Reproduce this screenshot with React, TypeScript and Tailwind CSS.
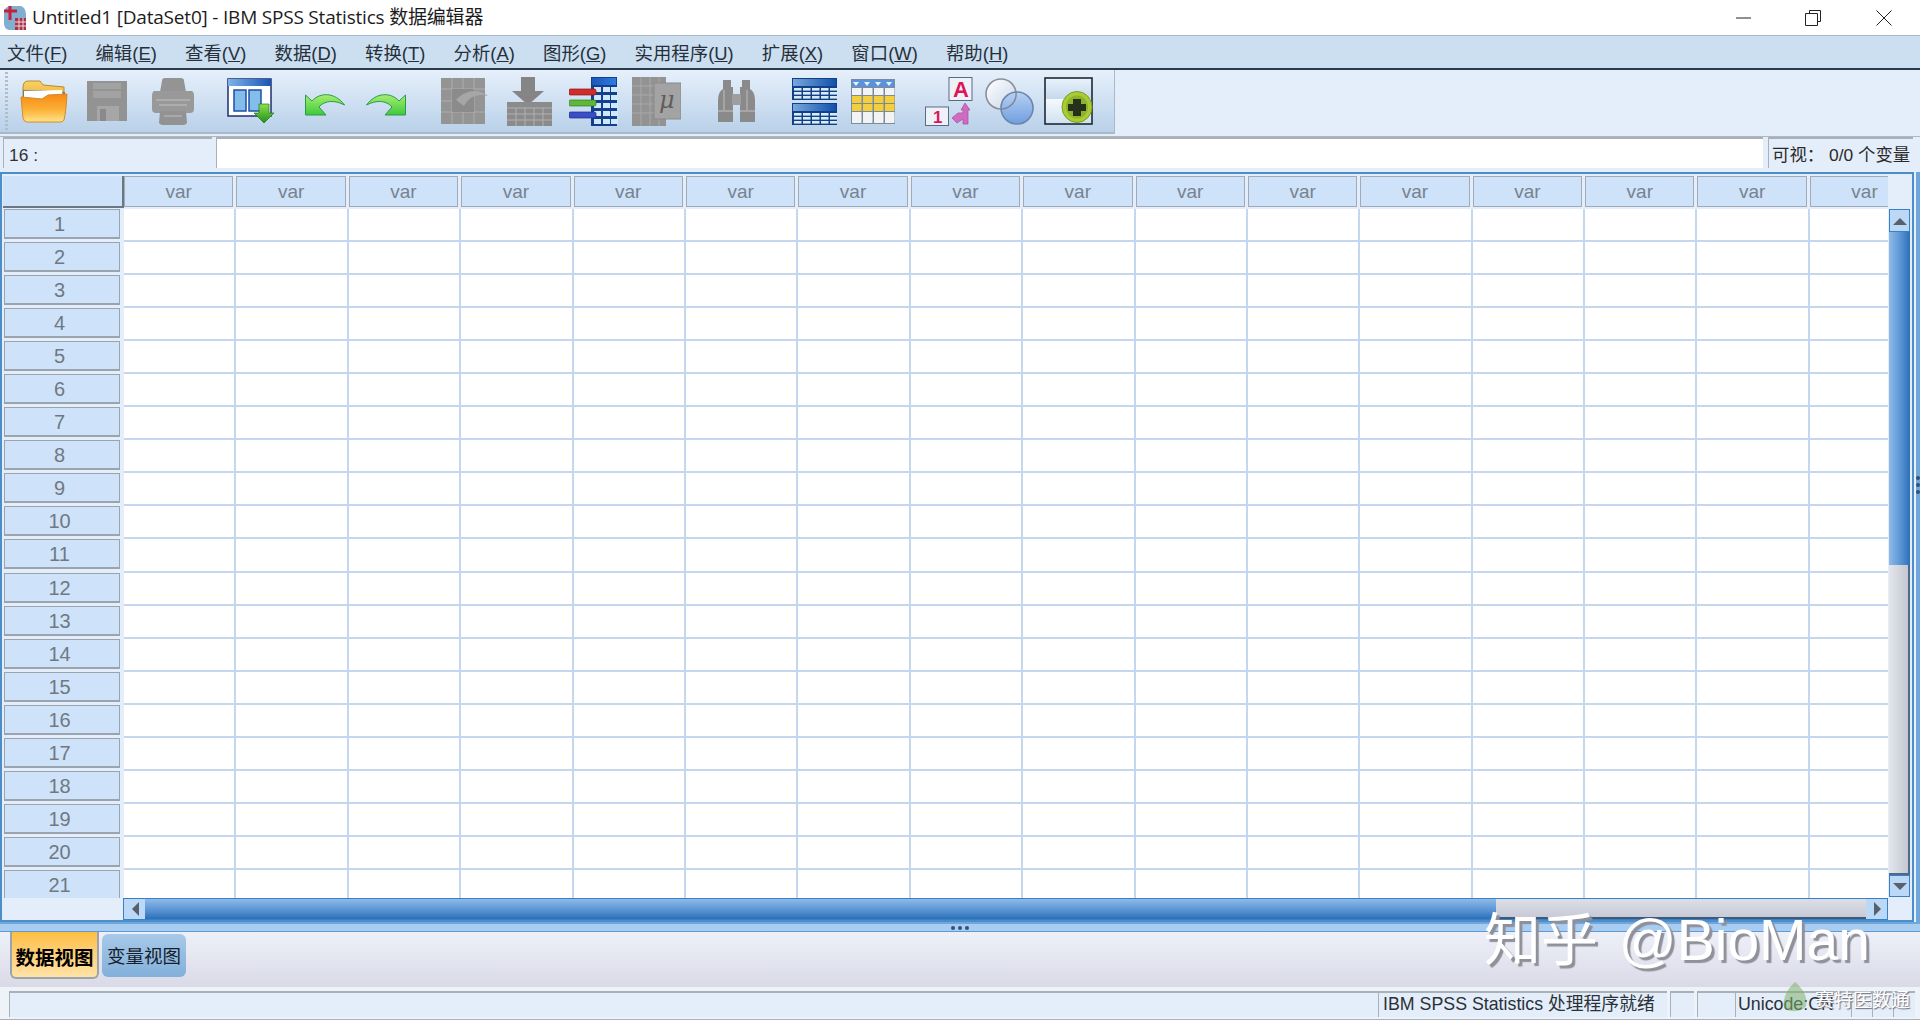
import React from "react";

const menus: [string, string][] = [
  ["文件", "F"], ["编辑", "E"], ["查看", "V"], ["数据", "D"], ["转换", "T"], ["分析", "A"],
  ["图形", "G"], ["实用程序", "U"], ["扩展", "X"], ["窗口", "W"], ["帮助", "H"],
];
const cols = Array.from({ length: 16 }, (_, i) => i);
const rows = Array.from({ length: 21 }, (_, i) => i + 1);

function AppIcon() {
  return (
    <svg width="25" height="26" viewBox="0 0 25 26" className="shrink-0">
      <path d="M2 8 Q2 1 10 1 L19 1 Q24 3 24 10 L24 22 Q23 25 18 25 L7 25 Q2 24 2 18 Z" fill="#7fb0d0" />
      <rect x="13" y="13" width="11" height="12" fill="#a8324a" />
      <path d="M13 17h11M13 21h11M17 13v12M21 13v12" stroke="#f2d9de" strokeWidth="1" />
      <path d="M8 1v14M2 6h13" stroke="#c8203c" strokeWidth="3" />
    </svg>
  );
}

function Folder() {
  return (
    <svg width="48" height="43" viewBox="0 0 48 43">
      <defs>
        <linearGradient id="fa" x1="0" y1="0" x2="0" y2="1"><stop offset="0" stopColor="#f8d468" /><stop offset="1" stopColor="#e8a92c" /></linearGradient>
        <linearGradient id="fb" x1="0" y1="0" x2="0" y2="1"><stop offset="0" stopColor="#f78a16" /><stop offset="0.55" stopColor="#fbb035" /><stop offset="1" stopColor="#ffe48c" /></linearGradient>
      </defs>
      <path d="M3 8 Q3 1 8 1 L20 1 L23 5 L44 7 L44 22 L3 22 Z" fill="url(#fa)" stroke="#b98a30" />
      <path d="M3 10 L20 10 L45 12 L45 22 L3 22Z" fill="#3f5c8e" opacity="0.6" />
      <path d="M4 11 L42 10 L43 20 L4 20 Z" fill="#fff" />
      <path d="M1 17 L22 19 L28 15 L47 14 Q46 32 44 40 Q43 42 40 42 L7 42 Q4 42 3 38 Z" fill="url(#fb)" stroke="#d48a24" />
    </svg>
  );
}

function SaveIcon() {
  return (
    <svg width="40" height="40" viewBox="0 0 40 40">
      <rect x="0" y="0" width="40" height="40" fill="#939393" />
      <rect x="6" y="2" width="28" height="15" fill="#a2a2a2" />
      <path d="M6 9h28" stroke="#868686" />
      <rect x="10" y="25" width="22" height="15" fill="#a6a6a6" />
      <rect x="13" y="28" width="6" height="12" fill="#8a8a8a" />
    </svg>
  );
}

function PrintIcon() {
  return (
    <svg width="42" height="47" viewBox="0 0 42 47">
      <path d="M10 3 Q10 0 13 0 L29 0 Q32 0 32 3 L34 14 L8 14 Z" fill="#949494" />
      <path d="M2 13 L40 13 Q42 14 42 18 L42 31 Q42 35 38 35 L4 35 Q0 35 0 31 L0 18 Q0 14 2 13Z" fill="#999999" />
      <path d="M4 22h34M7 27h28" stroke="#adadad" strokeWidth="2" />
      <path d="M8 33 L34 33 L35 45 Q34 47 31 47 L11 47 Q8 47 7 45 Z" fill="#929292" />
      <path d="M12 38h18" stroke="#a8a8a8" strokeWidth="2" />
    </svg>
  );
}

function DataWindow() {
  return (
    <svg width="48" height="46" viewBox="0 0 48 46">
      <defs>
        <linearGradient id="dw" x1="0" y1="0" x2="1" y2="0"><stop offset="0" stopColor="#7db4ea" /><stop offset="1" stopColor="#1b55b2" /></linearGradient>
        <linearGradient id="dg" x1="0" y1="0" x2="0" y2="1"><stop offset="0" stopColor="#8fe04c" /><stop offset="1" stopColor="#1d8f1d" /></linearGradient>
      </defs>
      <rect x="1" y="1" width="43" height="37" fill="#fff" stroke="#1f2f6e" strokeWidth="1.5" />
      <rect x="1" y="1" width="43" height="7" fill="url(#dw)" />
      <rect x="7" y="12" width="12" height="21" fill="#83bdea" stroke="#1e4fa8" strokeWidth="1.5" />
      <rect x="22" y="12" width="12" height="21" fill="#83bdea" stroke="#1e4fa8" strokeWidth="1.5" />
      <path d="M32 26 L42 26 L42 35 L47 35 L37 45 L27 35 L32 35 Z" fill="url(#dg)" stroke="#1c7a1c" strokeWidth="0.7" />
    </svg>
  );
}

function Curl({ flip }: { flip?: boolean }) {
  const id = flip ? "cr" : "cl";
  return (
    <svg width="40" height="24" viewBox="0 0 40 24" className={flip ? "-scale-x-100" : ""}>
      <defs>
        <linearGradient id={id} x1="0" y1="0" x2="0" y2="1"><stop offset="0" stopColor="#a6ee70" /><stop offset="1" stopColor="#3fc93c" /></linearGradient>
      </defs>
      <path d="M0.5 23 L0.5 3 L7 9 C15 0 30 0 39.5 13 C30 8 20 8 14 15 L21 23 Z" fill={`url(#${id})`} stroke="#2a9a4a" />
    </svg>
  );
}

function GotoIcon() {
  return (
    <svg width="48" height="46" viewBox="0 0 48 46">
      <rect width="44" height="46" fill="#949494" />
      <path d="M0 11h44M0 34h44M11 0v46M22 0v46M33 0v46M0 23h12" stroke="#adadad" />
      <rect x="11" y="11" width="22" height="23" fill="#8b8b8b" />
      <path d="M15 22 C24 12 38 10 47 18 C38 15 28 18 23 28 Z" fill="#a6a6a6" />
    </svg>
  );
}

function InsertIcon() {
  return (
    <svg width="46" height="49" viewBox="0 0 46 49">
      <path d="M14 0h14v14h9L21 28 5 14h9Z" fill="#858585" />
      <rect x="0" y="25" width="45" height="24" fill="#8b8b8b" />
      <path d="M0 31h45M0 37h45M0 43h45M9 31v18M18 31v18M27 31v18M36 31v18" stroke="#b0b0b0" />
    </svg>
  );
}

function VarsIcon() {
  return (
    <svg width="49" height="49" viewBox="0 0 49 49">
      <defs>
        <linearGradient id="vh" x1="0" y1="0" x2="1" y2="0"><stop offset="0" stopColor="#1a57b8" /><stop offset="1" stopColor="#2f7be0" /></linearGradient>
      </defs>
      <rect x="22" y="0" width="26" height="49" fill="#12408f" />
      <rect x="23" y="1" width="24" height="7" fill="url(#vh)" />
      {[11, 19, 27, 35, 43].map((y) => [26, 35, 43].map((x) => <rect key={`${x}-${y}`} x={x - 1} y={y - 1} width="7" height="5" fill="#cfe8fb" />))}
      <rect x="0" y="12" width="27" height="6" rx="1.5" fill="#d22b2b" stroke="#8e1616" strokeWidth="0.7" />
      <rect x="0" y="23" width="27" height="6" rx="1.5" fill="#5fb638" stroke="#2d7f1e" strokeWidth="0.7" />
      <rect x="0" y="35" width="27" height="6" rx="1.5" fill="#3a4fc7" stroke="#1d2d8d" strokeWidth="0.7" />
    </svg>
  );
}

function MuIcon() {
  return (
    <svg width="49" height="49" viewBox="0 0 49 49">
      <rect width="34" height="49" fill="#939393" />
      <path d="M0 9h34M0 18h34M0 27h34M0 36h34M9 0v49M18 0v49M27 0v49" stroke="#a8a8a8" />
      <rect x="22" y="6" width="27" height="36" fill="#a3a3a3" stroke="#8a8a8a" />
      <text x="27" y="31" fontSize="24" fontStyle="italic" fill="#5e5e5e" className="[font-family:'DejaVu_Serif',serif]">μ</text>
    </svg>
  );
}

function Binoculars() {
  return (
    <svg width="37" height="42" viewBox="0 0 37 42">
      <path d="M5 0h8v7h2v35H0V20Q0 12 5 9Z" fill="#8a8a8a" />
      <path d="M24 0h8v9q5 3 5 11v22H22V7h2Z" fill="#8a8a8a" />
      <rect x="14" y="14" width="9" height="11" fill="#9e9e9e" />
      <path d="M0 31h15M22 31h15" stroke="#a6a6a6" strokeWidth="2" />
      <path d="M6 10v20M29 10v20" stroke="#a4a4a4" strokeWidth="2" />
    </svg>
  );
}

function SplitGrid() {
  const mini = (y: number, key: string) => (
    <g key={key}>
      <rect x="0" y={y} width="45" height="22" fill="#123f86" />
      <rect x="1" y={y + 1} width="43" height="7" fill={`url(#sg)`} />
      {[y + 10, y + 14, y + 18].map((yy) =>
        [2, 11, 20, 29, 38].map((x) => <rect key={`${x}-${yy}`} x={x} y={yy} width="7.5" height="2.6" fill="#d6ebfb" />)
      )}
    </g>
  );
  return (
    <svg width="45" height="47" viewBox="0 0 45 47">
      <defs>
        <linearGradient id="sg" x1="0" y1="0" x2="1" y2="0"><stop offset="0" stopColor="#78a8dc" /><stop offset="1" stopColor="#1250ad" /></linearGradient>
      </defs>
      {mini(0, "a")}
      {mini(25, "b")}
    </svg>
  );
}

function YellowGrid() {
  return (
    <svg width="44" height="45" viewBox="0 0 44 45">
      <rect width="44" height="45" fill="#7d8a9a" />
      <rect x="1" y="1" width="42" height="7" fill="#5a93dc" />
      {[5, 16, 27, 38].map((x) => <path key={x} d={`M${x - 3} 3h6l-3 4z`} fill="#e8f2fb" />)}
      {[9, 17, 25, 33, 39].map((y, r) =>
        [1, 12, 23, 34].map((x) => (
          <rect key={`${x}-${y}`} x={x} y={y} width="9.5" height={r === 4 ? 5 : 7} fill={r === 1 || r === 2 ? "#f3cf3e" : "#f2f3f4"} />
        ))
      )}
    </svg>
  );
}

function LabelsIcon() {
  return (
    <svg width="48" height="49" viewBox="0 0 48 49">
      <rect x="24" y="0.5" width="23" height="23" fill="#eef2f8" stroke="#5a6a85" />
      <text x="28" y="20" fontSize="22" fontWeight="700" fill="#dd1558" className="[font-family:'Liberation_Sans',sans-serif]">A</text>
      <rect x="0.5" y="30" width="23" height="18.5" fill="#eef2f8" stroke="#5a6a85" />
      <text x="8" y="46" fontSize="17" fontWeight="700" fill="#dd1558" className="[font-family:'Liberation_Sans',sans-serif]">1</text>
      <path d="M40 26 L45 33 L43 33 L43 47 L38 47 L38 42 L32 46 L27 41 L33 36 L38 36 L38 33 L36 33 Z" fill="#cf6cc0" stroke="#a84c9e" strokeWidth="0.7" />
    </svg>
  );
}

function CirclesIcon() {
  return (
    <svg width="49" height="47" viewBox="0 0 49 47">
      <defs>
        <linearGradient id="c1" x1="0" y1="0" x2="1" y2="1"><stop offset="0" stopColor="#ffffff" /><stop offset="1" stopColor="#c9d6ea" /></linearGradient>
        <linearGradient id="c2" x1="0" y1="0" x2="0" y2="1"><stop offset="0" stopColor="#b8d0f2" /><stop offset="1" stopColor="#6f9fe0" /></linearGradient>
      </defs>
      <circle cx="16" cy="16" r="15" fill="url(#c1)" stroke="#8a8f98" strokeWidth="1.6" />
      <circle cx="32" cy="30" r="16" fill="url(#c2)" stroke="#6a86ad" strokeWidth="1.6" />
      <path d="M31 14 A15 15 0 0 1 17 31" fill="none" stroke="#7b8794" strokeWidth="1.4" />
    </svg>
  );
}

function PlusBox() {
  return (
    <svg width="49" height="48" viewBox="0 0 49 48">
      <defs>
        <linearGradient id="pb" x1="0" y1="0" x2="0" y2="1"><stop offset="0" stopColor="#eaf3fb" /><stop offset="0.45" stopColor="#c6d9ec" /><stop offset="0.46" stopColor="#f4f9fd" /><stop offset="1" stopColor="#d0e1f1" /></linearGradient>
      </defs>
      <rect x="1" y="1" width="47" height="46" fill="url(#pb)" stroke="#1c2a38" strokeWidth="1.6" />
      <ellipse cx="33" cy="30" rx="15" ry="15.5" fill="#a9cc36" stroke="#7d9c20" />
      <ellipse cx="33" cy="30" rx="11" ry="11.5" fill="#8cb32a" />
      <path d="M29 22h8v5h5v7h-5v5h-8v-5h-5v-7h5z" fill="#26301a" />
    </svg>
  );
}

function Grip() {
  return (
    <div className="flex flex-col gap-[2px] w-[4px] ml-[5px]">
      {Array.from({ length: 15 }, (_, i) => (
        <span key={i} className="w-[3px] h-[2px] bg-[#b0bcc8]" />
      ))}
    </div>
  );
}

function Tri({ d }: { d: "up" | "down" | "left" | "right" }) {
  const p = { up: "M0 9 L7 2 L14 9Z", down: "M0 2 L14 2 L7 9Z", left: "M10 0 L10 14 L3 7Z", right: "M3 0 L3 14 L10 7Z" }[d];
  const h = d === "up" || d === "down";
  return (
    <svg width={h ? 14 : 12} height={h ? 10 : 14} viewBox={h ? "0 0 14 10" : "0 0 12 14"}>
      <path d={p} fill="#57606c" />
    </svg>
  );
}

export default function App() {
  return (
    <div className="relative w-[1920px] h-[1020px] overflow-hidden flex flex-col bg-[#e3eefa] text-[#222] [font-family:'Liberation_Sans','Noto_Sans_CJK_SC',sans-serif]">
      {/* title bar */}
      <div className="h-[35px] bg-white flex items-center pl-[2px] shrink-0">
        <AppIcon />
        <span className="ml-[5px] text-[19px] text-[#1c1c1c] [font-family:'Open_Sans','Noto_Sans_CJK_SC',sans-serif] tracking-[-0.2px] mt-[-1px]">Untitled1 [DataSet0] - IBM SPSS Statistics 数据编辑器</span>
        <div className="ml-auto flex items-center mr-[28px]">
          <svg width="16" height="16" viewBox="0 0 16 16" className="mr-[53px]"><path d="M0 8h15" stroke="#222" strokeWidth="1" /></svg>
          <svg width="16" height="16" viewBox="0 0 16 16" className="mr-[55px]"><path d="M4.5 3V0.5h11v11H13M0.5 3.5h12v12h-12z" fill="none" stroke="#222" /></svg>
          <svg width="16" height="16" viewBox="0 0 16 16"><path d="M0.5 0.5l15 15M15.5 0.5l-15 15" stroke="#222" /></svg>
        </div>
      </div>

      {/* menu bar */}
      <div className="h-[35px] shrink-0 bg-[#cbdff1] border-t border-[#a9b9c6] border-b-2 border-b-[#2a3a48] flex items-center pl-[7px] pt-[3px] gap-[28.2px] text-[18.4px] text-[#27303a]">
        {menus.map(([t, k]) => (
          <span key={k} className="whitespace-nowrap">
            {t}(<span className="underline">{k}</span>)
          </span>
        ))}
      </div>

      {/* toolbar */}
      <div className="h-[67px] shrink-0 border-b border-[#aeb8c2] bg-[#e3eefa]">
        <div className="w-[1115px] h-[64px] flex items-center bg-gradient-to-b from-[#e6f0fb] to-[#b9d1e9] border-r border-b-2 border-[#aab9c8]">
          <Grip />
          <div className="ml-[11px]"><Folder /></div>
          <div className="ml-[19px]"><SaveIcon /></div>
          <div className="ml-[25px]"><PrintIcon /></div>
          <div className="ml-[33px]"><DataWindow /></div>
          <div className="ml-[30px] mt-[6px]"><Curl /></div>
          <div className="ml-[21px] mt-[6px]"><Curl flip /></div>
          <div className="ml-[35px]"><GotoIcon /></div>
          <div className="ml-[18px]"><InsertIcon /></div>
          <div className="ml-[16px]"><VarsIcon /></div>
          <div className="ml-[14px]"><MuIcon /></div>
          <div className="ml-[37px]"><Binoculars /></div>
          <div className="ml-[37px]"><SplitGrid /></div>
          <div className="ml-[14px]"><YellowGrid /></div>
          <div className="ml-[30px]"><LabelsIcon /></div>
          <div className="ml-[12px]"><CirclesIcon /></div>
          <div className="ml-[10px]"><PlusBox /></div>
        </div>
      </div>

      {/* cell editor row */}
      <div className="h-[35px] shrink-0 flex pb-[4px] text-[17.4px]">
        <div className="ml-[3px] w-[209px] border-t-2 border-l border-[#a9b0b8] bg-[#e3eefa] pl-[5px] pt-[3px] text-[#333]">16 :</div>
        <div className="ml-[4px] w-[1547px] border-t-2 border-l border-[#a9b0b8] bg-white"></div>
        <div className="ml-[5px] w-[145px] border-t-2 border-l border-[#a9b0b8] pl-[3px] pt-[3px] whitespace-nowrap text-[#2a2a2a]">可视： 0/0 个变量</div>
      </div>

      {/* data grid */}
      <div className="h-[750px] shrink-0 flex">
        <div className="w-[1914px] border-2 border-[#4c8ec9] flex bg-[#e3eefa]">
          <div className="w-[1886px] flex flex-col">
            <div className="h-[35px] shrink-0 flex pt-[2px] overflow-hidden">
              <div className="w-[121px] ml-[1px] h-[32px] shrink-0 bg-[#cee2f9] border-r-2 border-b-2 border-[#6d7782]"></div>
              {cols.map((c) => (
                <div key={c} className="w-[112.4px] shrink-0 pr-[3px] h-[31px]">
                  <div className="h-full border border-[#a2abb5] bg-[#cee2f9] text-center text-[19px] leading-[30px] text-[#77838f]">var</div>
                </div>
              ))}
            </div>
            <div className="h-[689px] shrink-0 overflow-hidden">
              {rows.map((r) => (
                <div key={r} className="h-[33.06px] flex">
                  <div className="w-[122px] shrink-0 pl-[2px] pr-[4px] bg-[#e3eefa]">
                    <div className="h-[30px] border border-b-2 border-[#9aa4ae] bg-[#cee2f9] text-center pr-[5px] text-[20px] leading-[28px] text-[#6f7983]">{r}</div>
                  </div>
                  {cols.map((c) => (
                    <div key={c} className="w-[112.4px] shrink-0 bg-white border-r-2 border-b-2 border-[#c3d8ee]"></div>
                  ))}
                </div>
              ))}
            </div>
            <div className="h-[22px] shrink-0 flex">
              <div className="w-[121px] shrink-0"></div>
              <div className="flex-1 flex border border-[#3a80c8]">
                <div className="w-[21px] flex items-center justify-center bg-[#bcd8f7]"><Tri d="left" /></div>
                <div className="w-[1351px] bg-gradient-to-b from-[#8fbae8] via-[#5f98d6] to-[#2c70b8]"></div>
                <div className="flex-1 bg-gradient-to-b from-[#dcdfe7] to-[#c8cbd6] border-b-2 border-[#3e5a78]"></div>
                <div className="w-[21px] flex items-center justify-center bg-[#bcd8f7]"><Tri d="right" /></div>
              </div>
            </div>
          </div>
          <div className="w-[24px] shrink-0 flex flex-col pt-[35px] pb-[23px] pl-[1px] pr-[2px]">
            <div className="h-[23px] flex items-center justify-center bg-[#bcd8f7] border border-[#3a80c8]"><Tri d="up" /></div>
            <div className="h-[333px] bg-gradient-to-r from-[#8fbae8] via-[#5f98d6] to-[#2c70b8]"></div>
            <div className="flex-1 bg-gradient-to-r from-[#e4e6ec] to-[#c4c7d2] border-r-2 border-b-2 border-[#4d6a88]"></div>
            <div className="h-[22px] flex items-center justify-center bg-[#bcd8f7] border border-[#3a80c8]"><Tri d="down" /></div>
          </div>
        </div>
        <div className="w-[6px] bg-[#6ea6dd] border-l-2 border-[#e8f2fb] flex flex-col items-center gap-[3px] justify-center pb-[124px]">
          <span className="w-[4px] h-[4px] rounded-full bg-[#33507c]" />
          <span className="w-[4px] h-[4px] rounded-full bg-[#33507c]" />
          <span className="w-[4px] h-[4px] rounded-full bg-[#33507c]" />
        </div>
      </div>

      {/* splitter */}
      <div className="h-[10px] shrink-0 bg-[#a9cdf0] border-t-2 border-[#6ea6dd] border-b border-b-[#5d9ad6] flex items-center justify-center gap-[3px]">
        <span className="w-[4px] h-[4px] rounded-full bg-[#33507c]" />
        <span className="w-[4px] h-[4px] rounded-full bg-[#33507c]" />
        <span className="w-[4px] h-[4px] rounded-full bg-[#33507c]" />
      </div>

      {/* sheet tabs */}
      <div className="h-[55px] shrink-0 bg-gradient-to-b from-[#eef0f9] to-[#d9dae6] flex items-start pl-[10px]">
        <div className="w-[89px] h-[47px] pt-[9px] rounded-b-[6px] border-2 border-t-0 border-[#9aa4ae] bg-gradient-to-b from-[#fdbf40] to-[#ffe2a6] flex items-center justify-center text-[19.5px] font-bold text-black whitespace-nowrap">数据视图</div>
        <div className="ml-[3px] mt-[2px] w-[84px] h-[43px] pt-[2px] rounded-[6px] bg-gradient-to-b from-[#a8c9e8] to-[#82b0da] flex items-center justify-center text-[18.5px] text-[#16202c] whitespace-nowrap">变量视图</div>
      </div>

      {/* status bar */}
      <div className="h-[33px] shrink-0 bg-[#eef3fa] border-b border-[#a9b0b8] flex pt-[4px] pb-[2px] text-[17.8px] text-[#2b3138]">
        <div className="ml-[9px] w-[1369px] border-t-2 border-l border-[#a9b0b8] bg-[#e3eefa]"></div>
        <div className="w-[289px] border-t-2 border-l border-[#a9b0b8] bg-[#e3eefa] pl-[4px] leading-[23px] whitespace-nowrap">IBM SPSS Statistics 处理程序就绪</div>
        <div className="ml-[3px] w-[24px] border-t-2 border-l border-[#a9b0b8] bg-[#e3eefa]"></div>
        <div className="ml-[3px] w-[38px] border-t-2 border-l border-[#a9b0b8] bg-[#e3eefa]"></div>
        <div className="w-[116px] border-t-2 border-l border-[#a9b0b8] bg-[#e3eefa] pl-[2px] leading-[23px] whitespace-nowrap">Unicode:CN</div>
        <div className="w-[21px] border-t-2 border-l border-[#a9b0b8] bg-[#e3eefa]"></div>
        <div className="w-[21px] border-t-2 border-l border-[#a9b0b8] bg-[#e3eefa]"></div>
        <div className="w-[22px] border-t-2 border-l border-[#a9b0b8] bg-[#e3eefa]"></div>
      </div>

      {/* watermarks */}
      <div className="absolute left-[1484px] top-[904px] text-[57px] leading-[72px] whitespace-pre text-white [word-spacing:5px] [text-shadow:3px_3px_1px_#8f9099]">知乎 @BioMan</div>
      <svg className="absolute left-[1782px] top-[982px]" width="26" height="32" viewBox="0 0 26 32">
        <path d="M13 0 C20 6 26 14 24 24 C20 30 8 31 2 26 C0 16 6 6 13 0Z" fill="#7fb069" opacity="0.55" />
      </svg>
      <div className="absolute left-[1815px] top-[989px] text-[19px] leading-[24px] whitespace-nowrap text-white [text-shadow:1px_1px_1px_#6a6a76]">赛特医数通</div>
    </div>
  );
}
